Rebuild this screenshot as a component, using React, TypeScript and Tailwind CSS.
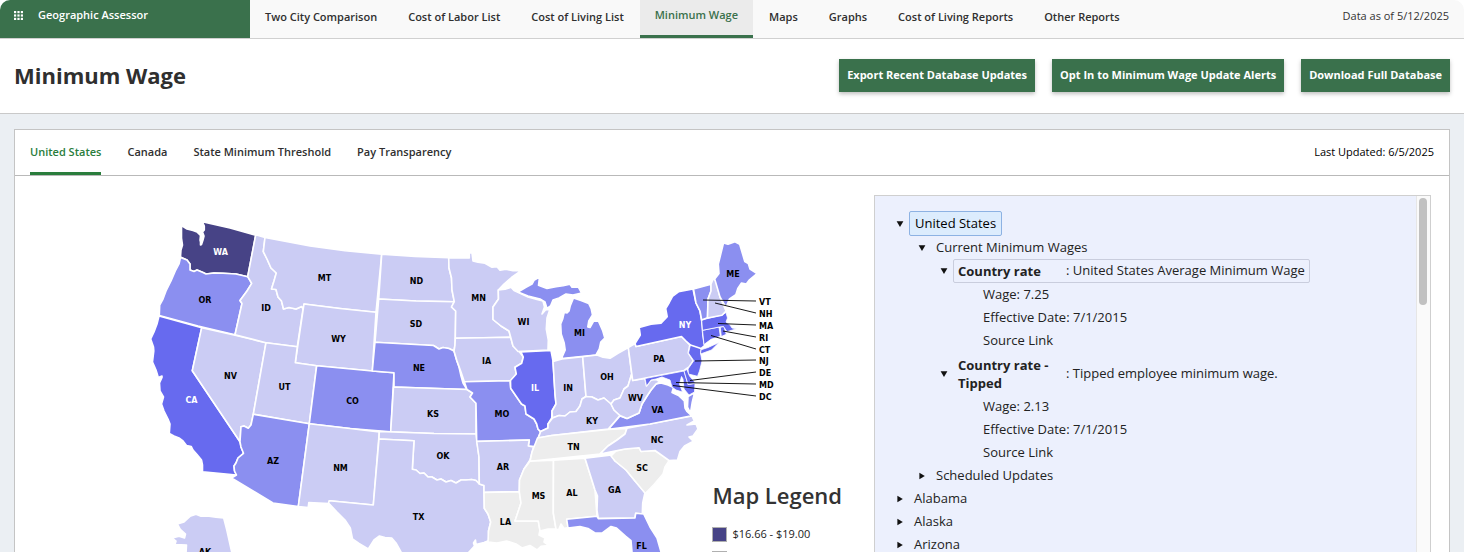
import React from 'react';

type Tone = 'dark' | 'strong' | 'mid' | 'light' | 'none';

const toneFill: Record<Tone, string> = {
  dark: 'fill-[#474386]',
  strong: 'fill-[#676aef]',
  mid: 'fill-[#8b8ff0]',
  light: 'fill-[#cbccf4]',
  none: 'fill-[#ededed]',
};

const states: { id: string; tone: Tone; thin?: boolean; d: string }[] = [
  { id: 'WA', tone: 'dark', d: 'M181.5 225.5L187 229 193 230.5 197 232 200.5 235.5 200 240 200.5 242 200.5 245 201.5 244.5 203 240 204 236 202.5 232 204.3 230 204.3 226 202.3 221.7 230 228 255.7 235.3 247.7 276.7 236 274 223 273.3 214 273 206 274 203 272.5 197 270 194 271.5 190 270 190 264 187 260 180.5 257 181 250 182.5 245 181.5 238Z' },
  { id: 'OR', tone: 'mid', d: 'M180.5 257.5L187 260 190 264 190 270 194 271.5 197 270 203 272.5 206 274 214 273 223 273.3 236 274 247.7 276.7 251.7 283.3 247 291 240 300.5 242 303.5 235 334.7 198 326 159.3 315.5 159.7 305 163 299 166 291 171 281 175.3 271 179 264Z' },
  { id: 'CA', tone: 'strong', d: 'M159 316L201.7 327.7 192.3 370.7 240 441.7 241 447 243.5 453.3 238 458 236 463 234 466 234.5 471 236.5 475 202.5 471.7 202.5 465 201.5 460 197 454.5 193 450 191.3 446.5 186.5 445.5 183 441 179 438 174 436 169.3 433.5 170 424 168 419 164 411 161.5 404 163.5 397 160 391 159.5 383 162 377.5 162 376 158.3 377.5 156 370 152.5 362 153.8 351 153.5 347 150.7 339 154 332 157 324Z' },
  { id: 'NV', tone: 'light', d: 'M201.7 327.7L234 335 266 342.7 253.3 414.3 251 425 248.3 428.3 244 426 241 426.7 240 441.7 192.3 370.7Z' },
  { id: 'ID', tone: 'light', d: 'M255.7 234.8L265 237.5 263.3 251.7 267 259 271 268 276.3 273 274 281 271.5 289 276 289.5 278 297 281.5 301 283.5 309 289 307.5 296 309 301.7 306.5 303 309 297.3 346.7 266 342.7 235 334.7 242 303.5 240 300.5 247 291 251.7 283.3 247.7 276.7Z' },
  { id: 'MT', tone: 'light', d: 'M265 237.5L310 246 345 250.8 381.7 254.3 376 312.3 340 308.5 304 304 303 309 301.7 306.5 296 309 289 307.5 283.5 309 281.5 301 278 297 276 289.5 271.5 289 274 281 276.3 273 271 268 267 259 263.3 251.7Z' },
  { id: 'WY', tone: 'light', d: 'M304 304L340 308.5 376 312.3 372.3 371 316.7 365.7 295.3 362.7Z' },
  { id: 'UT', tone: 'light', d: 'M266 342.7L297.3 346.7 295.3 362.7 316.7 365.7 309.3 423.7 253.3 414.3Z' },
  { id: 'AZ', tone: 'mid', d: 'M253.3 414.3L309.3 423.7 298.3 506.5 273 503 231.5 478 236.5 475 234.5 471 234 466 236 463 238 458 243.5 453.3 241 447 240 441.7 241 426.7 244 426 248.3 428.3 251 425Z' },
  { id: 'CO', tone: 'mid', d: 'M316.7 365.7L372.3 371 394 372.7 390.7 431.7 350 428.5 309.3 423.7Z' },
  { id: 'NM', tone: 'light', d: 'M309.3 423.7L350 428.5 379.3 432 373.3 505 329.3 500.7 329 503.5 308.8 502.5 308.2 507.5 298.3 506.5Z' },
  { id: 'ND', tone: 'light', d: 'M381.7 254.3L415 256.5 448.7 257.7 449 268 451.5 278 452 290 454.3 301.7 416 301 378.7 299Z' },
  { id: 'SD', tone: 'light', d: 'M378.7 299L416 301 454.3 301.7 451.5 307 455.7 311 455.3 337.3 455 345 454 351 449 348.5 443 347.5 439 349 433.5 345.5 375 342.3Z' },
  { id: 'NE', tone: 'mid', d: 'M375 342.3L433.5 345.5 439 349 443 347.5 449 348.5 454 351 456.5 360 459 367 461 376 463 383 467 389.5 394 387 394 372.7 372.3 371Z' },
  { id: 'KS', tone: 'light', d: 'M393.5 387L467 389.5 472.5 393 470 397 476 403.3 476 434 434 433.5 390.7 431.7Z' },
  { id: 'OK', tone: 'light', d: 'M379.3 431.5L434 433.5 476 434 479 457 479.3 484 476 480.5 471.7 479.5 466 480 461 480 456 483 451 480.5 446 482 441 479 437 480 432 477 428 477 424 473 420 473.5 416 470 412.3 469.3 414 440.7 379 439Z' },
  { id: 'TX', tone: 'light', d: 'M379 439L414 440.7 412.3 469.3 416 470 420 473.5 424 473 428 477 432 477 437 480 441 479 446 482 451 480.5 456 483 461 480 466 480 471.7 479.5 476 480.5 479.3 484 484 485.5 484.3 508.3 488 514 490.7 522 488.5 531 489 540.5 484 542.5 476 544.5 475.5 540 473.5 543 474.5 546 469 552 462 560 408 560 401 552 396 543 391.7 538 385 537.5 379.5 536 374 540 368.3 549 359 543.5 352.5 539 350.3 528 345 520 337 512 328.5 503 329.3 500.7 373.3 505Z' },
  { id: 'MN', tone: 'light', d: 'M448.7 258L469.3 258 469.3 253 472 253 473 261 478 262.3 485 263.3 492 267.3 497 266.8 500 270.3 506 269.3 513 270.7 521.5 270.5 511.5 277.5 504 284 498.3 290 498.5 299 493 307 493 319.5 501 326 509 331 510.7 337.3 455.3 338.3 455.7 311 451.5 307 454.3 301.7 452 290 451.5 278 449 268Z' },
  { id: 'IA', tone: 'light', d: 'M455.3 338.3L510.7 337.3 513 346 518 350 523.3 357 521.7 363.3 515 367.3 516.3 374 511 380.7 464.3 381.7 461 372 457 361 454 351 455 345Z' },
  { id: 'MO', tone: 'mid', d: 'M464.3 381.7L510 380.7 510.7 388.3 516 396 521.5 404 525 406 526 414 534 419 536.7 424 538 429 540.5 432 538 438 535 446.5 528.3 446 529.3 440 476.7 441.3 476 403.3 470 397 472.5 393 467 389.5Z' },
  { id: 'AR', tone: 'light', d: 'M476.7 441.5L529.3 440 528.3 446 533.5 447 530 460 524 469 519.5 480 519.3 491.7 484 492.3 484 485.5 479.3 484 479 457Z' },
  { id: 'LA', tone: 'none', d: 'M484 492.5L519.3 491.7 521 503 515 521 538.3 521 540 530 539 535 545 538 544 542 549 545.5 541 546.3 537 550 530 545.5 522 548 516 544 506.7 541 497 543 488 542 488.5 531 490.7 522 488 514 484.3 508.3Z' },
  { id: 'WI', tone: 'light', d: 'M498.3 290L505 289.3 511 287.3 514 290.5 519.5 293 528 297 537 299.5 543 301 544.5 307 542 314 545.5 310 550 309 547 318 546.3 329 548.3 340 548 350 518 351.5 513 346 510.7 337.3 509 331 501 326 493 319.5 493 307 498.5 299Z' },
  { id: 'MI', tone: 'mid', d: 'M518 292L526 287.3 532 284 534 280.3 539.5 277 538.5 285.3 541 286.3 547 288.5 556 286.7 563 285.7 570 284.3 572 287.3 578.5 287.3 581.5 293 573 295 566 294 559 298 553 300 550.5 306 547 308.5 545 302 540 299 528 296ZM573.5 298L581 300.5 588.7 303.5 591.3 309 592.5 315 588.8 321 587.8 327 590 327.5 593.5 321.3 598.5 321.3 602.8 331 604.8 338 600.8 342 599.3 349 596 355 561.5 358.5 565.2 350 564.2 343 561.2 334 560.7 324 562.7 319 564.3 312 567 313 569 311 570.2 306Z' },
  { id: 'IL', tone: 'strong', d: 'M521 352L551 350.5 553 361 555 394 556 404 552 411 551.7 418 548 424 548 428 540.7 431.5 538 429 536.7 424 534 419 526 414 525 406 521.5 404 516 396 510.7 388.3 510.5 380.5 516.3 374 515 367.3 521.7 363.3 523.3 357Z' },
  { id: 'IN', tone: 'light', d: 'M553 361.5L562 359 582.7 356.7 586 396.5 582 399 580 406 576 411.5 570 412 565 416 559 415.5 552.5 418 552 411 556 404 555 394Z' },
  { id: 'OH', tone: 'light', d: 'M582.7 356.7L597 355 603 357.3 610 358.3 618 353.3 628.3 347.5 631.7 374 628 386 624 389 620 398 614 400 611 404 604 398 598 400 592 397 586 396.5Z' },
  { id: 'KY', tone: 'light', d: 'M538.3 438L540.7 431.5 548 428 548 424 552.5 418 559 415.5 565 416 570 412 576 411.5 580 406 582 399 586 396.5 592 397 598 400 604 398 611 404 614 410 620 415.5 608.3 429 551.7 435.5Z' },
  { id: 'TN', tone: 'none', d: 'M537.5 438L551.7 435.5 608.3 429.5 627 428.5 625 434 617 440 608 446 600 454 530 461.3 532 452Z' },
  { id: 'MS', tone: 'none', d: 'M530 461.3L553.5 460.3 553.3 513 556 529 548 529 540 531 538.3 521 515 521 521 503 519.3 491.7 519.5 480 524 469Z' },
  { id: 'AL', tone: 'none', d: 'M553.5 460.3L585 458.3 595 490 597 516.3 566.7 519.3 568.3 527.5 564 528.5 561 524 558.5 530 556 529 553.3 513Z' },
  { id: 'GA', tone: 'light', d: 'M585 458.3L611.7 455 615 461 626 470 635 481 645 492.5 642.7 503 642.3 514 635.7 513.3 635 518 598.3 518.6 597 510 597.5 496 595 490Z' },
  { id: 'FL', tone: 'mid', d: 'M566.7 519.3L597 516.3 598.3 518.6 635 518 635.7 513.3 643.7 514 650 527 657 538 661 552 663 562 636 562 632 552 631 540.5 625.5 536 616.5 528 611 526.5 602.3 533 595 533 588 528.5 580 526.5 568 528Z' },
  { id: 'SC', tone: 'none', d: 'M611 456L616 451 625 449 639 447.7 641 451.5 655 450.5 669.5 460 665 467 663 474 654 484.5 645.3 493.5 635 481 626 470 615 461Z' },
  { id: 'NC', tone: 'light', d: 'M627 428.3L692 416 694.3 421 687 425 696 424 698 429 693 436 689 437 693.3 441.3 684.5 446 680 451.5 677.5 460 669 460.5 655 450.5 641 451.5 639 447.7 625 449 600 454 608 446 617 440 625 434Z' },
  { id: 'VA', tone: 'mid', d: 'M608.5 429.3L620 416 627 418.5 639 413 642 404 647 396 651 390 656 384 661 383 668 385 673.5 387.5 672 392.5 678.5 395.5 684.3 401 685 408 687 411.5 691.5 415.7 650 424ZM688 396.5L694.7 392.5 692.3 402 690.5 413 687.5 407Z' },
  { id: 'WV', tone: 'light', d: 'M631.7 374L632.7 380.5 645 378.5 646.5 386 651 380 656.5 379.5 660 382 656 384 651 390 647 396 642 404 639 413 627 418.5 620 415.5 614 410 611 404 614 400 620 398 624 389 628 386Z' },
  { id: 'PA', tone: 'light', d: 'M628.3 347.5L635 343.5 636 346.5 681.5 336.5 686 341 689.8 345 688.3 353 693.3 360.7 689 367 684 370.5 632.7 380.5Z' },
  { id: 'MD', tone: 'strong', thin: true, d: 'M645 378.5L684 371 688 384.5 695 383.5 694.5 392 689 395 684 389 683 379 681.5 376.5 679.5 384 682.5 392 676 390 672 387 670 380 662 377 656 379 651 380 646.5 386Z' },
  { id: 'DE', tone: 'strong', thin: true, d: 'M684 371L687 369.5 689.5 376 695.5 383 688 384.5Z' },
  { id: 'NJ', tone: 'strong', thin: true, d: 'M690.5 344.7L701 348 700.5 353 702 361 699.5 371 697.5 376.3 688.5 374 688 369 693.8 360.7 688.5 353Z' },
  { id: 'NY', tone: 'strong', d: 'M635 343.5L640.3 335 639.2 327.5 651 324.3 661 323.3 667.2 316.7 665.7 308.7 669.3 302.5 672.5 296.3 678.5 291.8 693 289 696 303 700 311 701.7 321 703 336 704.5 345.5 701 348.5 690.5 345 686 341 681.5 336.5 636 346.5Z' },
  { id: 'LI', tone: 'strong', thin: true, d: 'M701 349.8L708 347.5 719 342.5 711.5 350 700.5 354Z' },
  { id: 'CT', tone: 'strong', thin: true, d: 'M702.5 330.3L719 327 720.3 336.3 711 339.3 704 344.5Z' },
  { id: 'RI', tone: 'strong', thin: true, d: 'M720.3 327.3L723.8 326.3 726.3 334.3 721.3 336.5Z' },
  { id: 'MA', tone: 'strong', thin: true, d: 'M701.7 320L722 315 726 312.5 727.5 318 726 322 730 325 732 328 736.5 328.8 727 331.7 723.5 326.5 719.3 327 702.5 330.3Z' },
  { id: 'VT', tone: 'mid', d: 'M693.5 289L711 284.3 711 291 708 299 707.5 317.8 701.7 320 700 311 696 303Z' },
  { id: 'NH', tone: 'light', d: 'M711 284.3L713 279 716 280.5 720 297 726 311 722 315.3 707.5 318 708 299 711 291Z' },
  { id: 'ME', tone: 'mid', d: 'M714.7 279L719 273.5 718.3 264 720.3 256 723.5 243 728 244.3 735 241.7 739.7 244.3 744.8 261.5 748.3 263.5 750 269 757 273.5 749.5 279.8 746.3 284 741.5 283 737.8 288.5 735.8 294.7 729.5 298.8 726 307.5 720 297Z' },
  { id: 'AK', tone: 'light', d: 'M196 514.2L201 516.3 209 516.3 216 517.3 223.7 518 226.8 530 230.8 548 234 562 185.5 562 186.5 545 175 544.5 176 541 172.3 538 179 536.3 184.5 538 185.5 534 180.3 529.3 177.3 524 184 522 190 516.3Z' },
];

const labels: { t: string; x: number; y: number; light?: boolean }[] = [
  { t: 'WA', x: 220.5, y: 252, light: true },
  { t: 'OR', x: 205, y: 300 },
  { t: 'CA', x: 191.5, y: 399.5, light: true },
  { t: 'NV', x: 230.5, y: 376 },
  { t: 'ID', x: 266, y: 308 },
  { t: 'MT', x: 324.5, y: 278 },
  { t: 'WY', x: 338.5, y: 339 },
  { t: 'UT', x: 284.5, y: 387 },
  { t: 'AZ', x: 273, y: 461 },
  { t: 'CO', x: 352.5, y: 400.5 },
  { t: 'NM', x: 340.5, y: 467.5 },
  { t: 'ND', x: 416.5, y: 280.5 },
  { t: 'SD', x: 416, y: 324 },
  { t: 'NE', x: 419, y: 368 },
  { t: 'KS', x: 433, y: 413.5 },
  { t: 'OK', x: 443, y: 456 },
  { t: 'TX', x: 418.5, y: 516.5 },
  { t: 'MN', x: 478.5, y: 298 },
  { t: 'IA', x: 486.5, y: 360.5 },
  { t: 'MO', x: 502, y: 414 },
  { t: 'AR', x: 503, y: 466.5 },
  { t: 'LA', x: 505.5, y: 522 },
  { t: 'WI', x: 523.5, y: 321.5 },
  { t: 'MI', x: 579.5, y: 332.5 },
  { t: 'IL', x: 535, y: 388, light: true },
  { t: 'IN', x: 568, y: 387.5 },
  { t: 'OH', x: 607, y: 377 },
  { t: 'KY', x: 592, y: 421 },
  { t: 'TN', x: 573.5, y: 447 },
  { t: 'MS', x: 538.5, y: 496 },
  { t: 'AL', x: 572, y: 492.5 },
  { t: 'GA', x: 614.5, y: 489.5 },
  { t: 'FL', x: 641.5, y: 546 },
  { t: 'SC', x: 642, y: 467.5 },
  { t: 'NC', x: 657, y: 439.5 },
  { t: 'VA', x: 657.5, y: 410 },
  { t: 'WV', x: 635.5, y: 398 },
  { t: 'PA', x: 659, y: 359 },
  { t: 'NY', x: 685, y: 324.5, light: true },
  { t: 'ME', x: 733, y: 273.5 },
  { t: 'AK', x: 205, y: 552 },
];

const callouts: { t: string; x: number; y: number; lx: number; ly: number }[] = [
  { t: 'VT', x: 703, y: 300, lx: 757, ly: 301 },
  { t: 'NH', x: 715, y: 303, lx: 757, ly: 313 },
  { t: 'MA', x: 718, y: 323.5, lx: 757, ly: 325 },
  { t: 'RI', x: 723, y: 331, lx: 757, ly: 337 },
  { t: 'CT', x: 711, y: 335.5, lx: 757, ly: 349 },
  { t: 'NJ', x: 695, y: 361, lx: 757, ly: 360 },
  { t: 'DE', x: 690, y: 380.5, lx: 757, ly: 372 },
  { t: 'MD', x: 676, y: 382.5, lx: 757, ly: 384 },
  { t: 'DC', x: 673, y: 385.5, lx: 757, ly: 396 },
];

function UsMap() {
  return (
    <svg
      viewBox="140 210 660 352"
      className="h-[352px] w-[660px] shrink-0 font-['DejaVu_Sans',Verdana,sans-serif] text-[8px] font-bold"
      role="img"
      aria-label="Minimum wage by state"
    >
      <g className="stroke-white" strokeLinejoin="round">
        {states.map((s) => (
          <path key={s.id} d={s.d} strokeWidth={s.thin ? 0.8 : 1.6} className={toneFill[s.tone]} />
        ))}
      </g>
      {labels.map((l) => (
        <text key={l.t} x={l.x} y={l.y + 3} textAnchor="middle" className={l.light ? 'fill-white' : 'fill-black'}>
          {l.t}
        </text>
      ))}
      {callouts.map((c) => (
        <g key={c.t}>
          <line x1={c.x} y1={c.y} x2={c.lx - 1} y2={c.ly} stroke="#000" strokeWidth="0.9" />
          <text x={c.lx + 2} y={c.ly + 4} className="fill-black">
            {c.t}
          </text>
        </g>
      ))}
    </svg>
  );
}

const navItems = [
  'Two City Comparison',
  'Cost of Labor List',
  'Cost of Living List',
  'Minimum Wage',
  'Maps',
  'Graphs',
  'Cost of Living Reports',
  'Other Reports',
];

function TopBar() {
  return (
    <header className="flex h-[39px] shrink-0 overflow-hidden rounded-t-[10px] border-b border-[#d0d0d0] bg-[#f9f9f9]">
      <div className="-mb-px flex w-[250px] shrink-0 items-center gap-[15px] bg-[#3a714c] pb-2 pl-[14px] text-white">
        <button type="button" aria-label="Applications">
          <svg viewBox="0 0 9 9" className="h-[9px] w-[9px] fill-white" aria-hidden="true">
            {[0, 3.4, 6.8].map((y) =>
              [0, 3.4, 6.8].map((x) => <rect key={`${x}-${y}`} x={x} y={y} width="2.2" height="2.2" />),
            )}
          </svg>
        </button>
        <span className="text-[11px] font-semibold">Geographic Assessor</span>
      </div>
      <nav className="flex gap-px text-[11px] font-semibold text-[#2f2f2f]">
        {navItems.map((item) =>
          item === 'Minimum Wage' ? (
            <a
              key={item}
              href="#"
              aria-current="page"
              className="flex items-center border-b-[3px] border-[#3a714c] bg-[#ebebeb] px-[15px] pb-1 whitespace-nowrap text-[#3a714c]"
            >
              {item}
            </a>
          ) : (
            <a key={item} href="#" className="flex items-center px-[15px] pb-1 whitespace-nowrap">
              {item}
            </a>
          ),
        )}
      </nav>
      <div className="ml-auto flex items-center pr-[15px] pb-[5px] text-[11px] whitespace-nowrap text-[#333]">
        Data as of 5/12/2025
      </div>
    </header>
  );
}

function TitleBar() {
  return (
    <div className="flex h-[75px] shrink-0 items-center justify-between border-b border-[#c9c9c9] bg-white px-[14px] pb-[2px]">
      <h1 className="text-[22px] font-bold text-[#2f2f2f]">Minimum Wage</h1>
      <div className="flex gap-[17px]">
        {['Export Recent Database Updates', 'Opt In to Minimum Wage Update Alerts', 'Download Full Database'].map((b) => (
          <button
            key={b}
            type="button"
            className="h-[33px] bg-[#3a714c] px-2 text-[11px] font-bold whitespace-nowrap text-white shadow-[0_2px_4px_rgba(0,0,0,0.25)]"
          >
            {b}
          </button>
        ))}
      </div>
    </div>
  );
}

function CountryTabs() {
  return (
    <div className="flex h-[46px] items-stretch gap-[26px] border-b border-[#b9b9b9] px-[15px] text-[11px]">
      {['United States', 'Canada', 'State Minimum Threshold', 'Pay Transparency'].map((t, i) => (
        <button
          key={t}
          type="button"
          className={
            i === 0
              ? 'border-b-[3px] border-[#2a7d3c] pt-[3px] font-semibold whitespace-nowrap text-[#2a7d3c]'
              : 'border-b-[3px] border-transparent pt-[3px] font-semibold whitespace-nowrap text-[#2f2f2f]'
          }
        >
          {t}
        </button>
      ))}
      <span className="ml-auto self-center whitespace-nowrap text-black">Last Updated: 6/5/2025</span>
    </div>
  );
}

function Legend() {
  return (
    <section className="text-[#333]">
      <h2 className="text-[22px] leading-[32px] font-semibold">Map Legend</h2>
      <ul className="mt-[11px] flex flex-col text-[11px] text-[#222]">
        <li className="flex h-6 items-center gap-[5px]">
          <span className="h-[15px] w-[15px] border border-[#b0b0b0] bg-[#474386]" />
          $16.66 - $19.00
        </li>
        <li className="flex h-6 items-center gap-[5px]">
          <span className="h-[15px] w-[15px] border border-[#b0b0b0] bg-[#676aef]" />
          $14.34 - $16.65
        </li>
      </ul>
    </section>
  );
}

function Arrow({ open }: { open: boolean }) {
  return (
    <svg viewBox="0 0 8 8" className="h-2 w-2 shrink-0 fill-[#111]" aria-hidden="true">
      {open ? <path d="M0.6 1.2h6.8L4 7z" /> : <path d="M1.4 0.8L6.8 4 1.4 7.2z" />}
    </svg>
  );
}

function Branch({ open, children }: { open: boolean; children: React.ReactNode }) {
  return (
    <button type="button" aria-expanded={open} className="flex items-center gap-[5px] text-left">
      <Arrow open={open} />
      {children}
    </button>
  );
}

function Rate({ name, text, wage, boxed }: { name: string; text: string; wage: string; boxed?: boolean }) {
  return (
    <li>
      <Branch open>
        <span
          className={
            boxed
              ? 'flex h-6 items-center rounded-[2px] border border-[#c9cddd] px-1'
              : 'flex h-[43px] items-center border border-transparent px-1'
          }
        >
          <span className="w-[108px] pr-3 leading-[18px] font-bold">{name}</span>
          <span className="whitespace-nowrap">: {text}</span>
        </span>
      </Branch>
      <ul className="pl-[43px]">
        <li className="leading-[23px]">Wage: {wage}</li>
        <li className="leading-[23px]">Effective Date: 7/1/2015</li>
        <li className="leading-[23px]">
          <a href="#">Source Link</a>
        </li>
      </ul>
    </li>
  );
}

function WageTree() {
  return (
    <div className="mt-[19px] mr-[18px] flex w-[557px] shrink-0 border border-[#cfcfcf] bg-[#ecf0fd]">
      <ul className="min-w-0 flex-1 pt-[15px] pl-[21px] text-[13px] text-[#222]">
        <li>
          <Branch open>
            <span className="flex h-[25px] items-center rounded-[2px] border border-[#8db2e3] bg-[#dcecfd] px-[5px] text-black">
              United States
            </span>
          </Branch>
          <ul className="pl-[22px]">
            <li>
              <Branch open>
                <span className="px-[5px] leading-[23px]">Current Minimum Wages</span>
              </Branch>
              <ul className="pl-[22px]">
                <Rate name="Country rate" text="United States Average Minimum Wage" wage="7.25" boxed />
                <Rate name="Country rate - Tipped" text="Tipped employee minimum wage." wage="2.13" />
              </ul>
            </li>
            <li>
              <Branch open={false}>
                <span className="px-[5px] leading-[23px]">Scheduled Updates</span>
              </Branch>
            </li>
          </ul>
        </li>
        {['Alabama', 'Alaska', 'Arizona'].map((s) => (
          <li key={s}>
            <Branch open={false}>
              <span className="px-[5px] leading-[23px]">{s}</span>
            </Branch>
          </li>
        ))}
      </ul>
      <div className="w-[14px] shrink-0 border-l border-[#e6e6e6] bg-[#fafafa] px-[2px] pt-[2px]">
        <div className="h-[107px] w-2 rounded-full bg-[#c1c1c1]" />
      </div>
    </div>
  );
}

export default function App() {
  return (
    <div className="flex h-screen flex-col overflow-hidden bg-white font-['Open_Sans',sans-serif]">
      <TopBar />
      <TitleBar />
      <main className="min-h-0 flex-1 overflow-hidden bg-[#ebeff3] px-[14px] pt-[15px]">
        <div className="border border-[#c4c4c4] bg-white">
          <CountryTabs />
          <div className="flex">
            <div className="grid flex-1">
              <div className="col-start-1 row-start-1 flex justify-center pt-[34px] pl-[51px]">
                <UsMap />
              </div>
              <div className="col-start-1 row-start-1 flex items-start justify-end pt-[303px] pr-[32px]">
                <Legend />
              </div>
            </div>
            <WageTree />
          </div>
        </div>
      </main>
    </div>
  );
}
